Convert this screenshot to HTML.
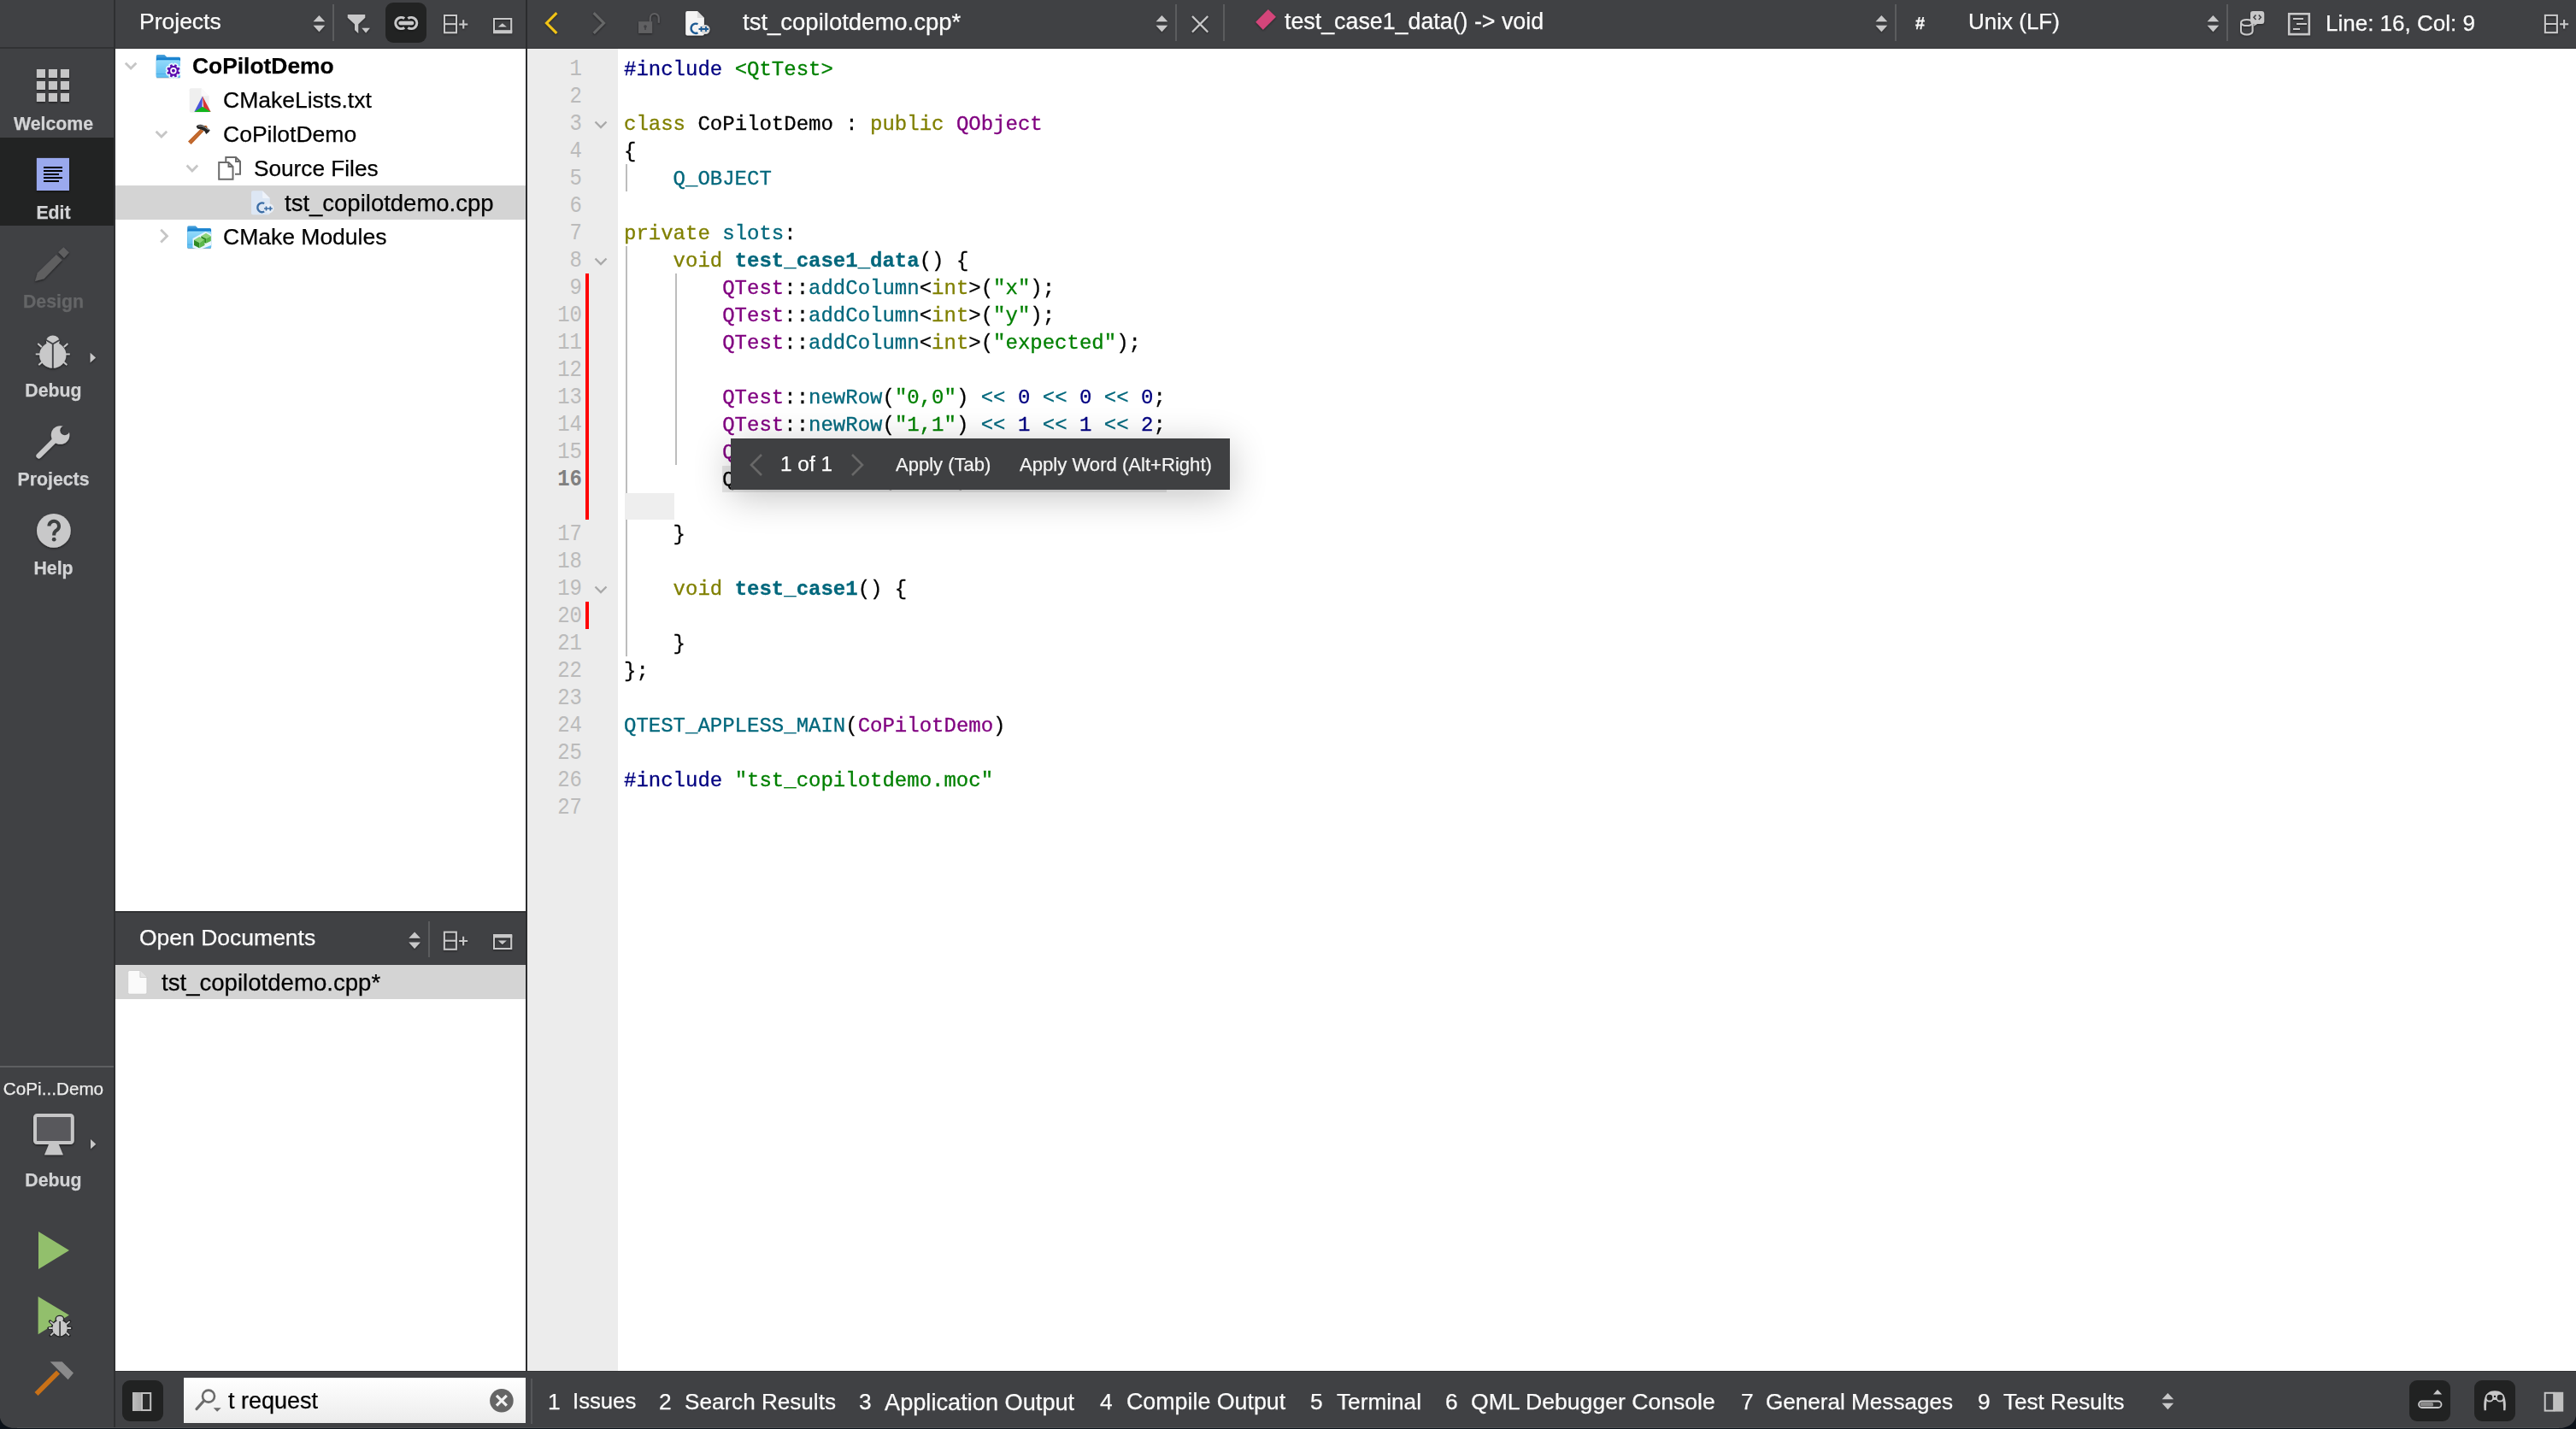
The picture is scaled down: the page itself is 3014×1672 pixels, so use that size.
<!DOCTYPE html>
<html><head><meta charset="utf-8">
<style>
html,body{margin:0;padding:0;width:3014px;height:1672px;overflow:hidden;background:#fff;}
.a{position:absolute;}
.t{position:absolute;font-family:"Liberation Sans",sans-serif;white-space:pre;line-height:1;will-change:transform;-webkit-text-stroke:0.25px currentColor;}
.ui{font-size:26.5px;color:#fbfbfb;}
.tr{font-size:26.5px;color:#000;}
.lab{font-size:21.3px;font-weight:bold;color:#d2d3d5;text-align:center;width:133px;left:-4px;}
.sep{position:absolute;width:2px;background:#5b5c5e;}
.code{position:absolute;left:730px;font-family:"Liberation Mono",monospace;font-size:24px;line-height:32px;white-space:pre;color:#000;-webkit-text-stroke:0.3px currentColor;will-change:transform;}
.ln{position:absolute;left:617px;width:64px;text-align:right;font-family:"Liberation Mono",monospace;font-size:24px;line-height:32px;color:#bbbbbb;transform:scaleY(1.15);transform-origin:0 24px;}
.pp{color:#000080}.st{color:#008000}.kw{color:#808000}.ty{color:#800080}.fn{color:#00677c}.b{font-weight:bold}.nu{color:#000080}
svg{position:absolute;overflow:visible;}
</style></head><body>
<!-- ===== SIDEBAR ===== -->
<div class="a" style="left:0;top:0;width:133px;height:1672px;background:#404144"></div>
<div class="a" style="left:133px;top:0;width:2px;height:1672px;background:#2e2f31"></div>
<div class="a" style="left:0;top:55px;width:133px;height:2px;background:#313234"></div>
<div class="a" style="left:0;top:161px;width:133px;height:103px;background:#222323"></div>
<div class="a" style="left:0;top:1247px;width:133px;height:2px;background:#5e5f61"></div>

<div class="t lab" style="top:135px">Welcome</div>
<div class="t lab" style="top:239px">Edit</div>
<div class="t lab" style="top:343px;color:#646567">Design</div>
<div class="t lab" style="top:447px">Debug</div>
<div class="t lab" style="top:551px">Projects</div>
<div class="t lab" style="top:655px">Help</div>
<div class="t" style="top:1264px;left:-4px;width:133px;text-align:center;font-size:20.7px;color:#ececec">CoPi...Demo</div>
<div class="t lab" style="top:1371px">Debug</div>

<!-- ===== TOP BARS ===== -->
<div class="a" style="left:135px;top:0;width:2879px;height:56px;background:#404144"></div>
<div class="a" style="left:135px;top:56px;width:2879px;height:1px;background:#313234"></div>
<div class="a" style="left:615px;top:0;width:2px;height:1605px;background:#2b2c2e"></div>

<div class="t ui" style="left:163px;top:12px">Projects</div>
<div class="sep" style="left:389px;top:5px;height:43px"></div>
<div class="a" style="left:451px;top:3px;width:48px;height:47px;border-radius:9px;background:#222323"></div>

<div class="t ui" style="left:869px;top:12px;font-size:27.5px">tst_copilotdemo.cpp*</div>
<div class="sep" style="left:1375px;top:5px;height:43px"></div>
<div class="sep" style="left:1431px;top:5px;height:43px"></div>
<div class="t ui" style="left:1503px;top:12px;font-size:26.8px">test_case1_data() -&gt; void</div>
<div class="sep" style="left:2217px;top:5px;height:43px"></div>
<div class="t ui" style="left:2241px;top:17px;font-size:20px;font-weight:bold">#</div>
<div class="t ui" style="left:2303px;top:12px;font-size:26px">Unix (LF)</div>
<div class="sep" style="left:2605px;top:5px;height:43px"></div>
<div class="t ui" style="left:2721px;top:14px;font-size:26px">Line: 16, Col: 9</div>

<!-- ===== PROJECT TREE ===== -->
<div class="a" style="left:135px;top:217px;width:480px;height:40px;background:#d4d4d4"></div>
<div class="t tr" style="left:225px;top:64px;font-weight:bold;font-size:26.4px">CoPilotDemo</div>
<div class="t tr" style="left:261px;top:104px">CMakeLists.txt</div>
<div class="t tr" style="left:261px;top:144px">CoPilotDemo</div>
<div class="t tr" style="left:297px;top:184px;font-size:26.2px">Source Files</div>
<div class="t tr" style="left:333px;top:224px;font-size:27.5px">tst_copilotdemo.cpp</div>
<div class="t tr" style="left:261px;top:264px">CMake Modules</div>

<!-- ===== OPEN DOCUMENTS ===== -->
<div class="a" style="left:135px;top:1067px;width:480px;height:62px;background:#404144"></div>
<div class="a" style="left:135px;top:1066px;width:480px;height:2px;background:#313234"></div>
<div class="t ui" style="left:163px;top:1084px">Open Documents</div>
<div class="sep" style="left:501px;top:1078px;height:42px"></div>
<div class="a" style="left:135px;top:1129px;width:480px;height:40px;background:#d4d4d4"></div>
<div class="t tr" style="left:189px;top:1136px;font-size:27.6px">tst_copilotdemo.cpp*</div>

<!-- ===== EDITOR ===== -->
<div class="a" style="left:617px;top:57px;width:106px;height:1548px;background:#ececec"></div>

<!-- code -->
<div class="a" style="left:845px;top:545px;width:520px;height:31px;background:#e8e8e8"></div>
<div class="a" style="left:731px;top:577px;width:58px;height:31px;background:#eeeeee"></div>
<div class="a" style="left:732px;top:192px;width:2px;height:32px;background:#bdbdbd"></div>
<div class="a" style="left:732px;top:288px;width:2px;height:289px;background:#bdbdbd"></div>
<div class="a" style="left:732px;top:608px;width:2px;height:160px;background:#bdbdbd"></div>
<div class="a" style="left:790px;top:320px;width:2px;height:224px;background:#bdbdbd"></div>
<div class="a" style="left:685px;top:320px;width:4px;height:288px;background:#f00"></div>
<div class="a" style="left:685px;top:704px;width:4px;height:32px;background:#f00"></div>
<div class="ln" style="top:66px">1</div>
<div class="code" style="top:66px"><span class="pp">#include</span> <span class="st">&lt;QtTest&gt;</span></div>
<div class="ln" style="top:98px">2</div>
<div class="ln" style="top:130px">3</div>
<div class="code" style="top:130px"><span class="kw">class</span> CoPilotDemo : <span class="kw">public</span> <span class="ty">QObject</span></div>
<div class="ln" style="top:162px">4</div>
<div class="code" style="top:162px">{</div>
<div class="ln" style="top:194px">5</div>
<div class="code" style="top:194px">    <span class="fn">Q_OBJECT</span></div>
<div class="ln" style="top:226px">6</div>
<div class="ln" style="top:258px">7</div>
<div class="code" style="top:258px"><span class="kw">private</span> <span class="fn">slots</span>:</div>
<div class="ln" style="top:290px">8</div>
<div class="code" style="top:290px">    <span class="kw">void</span> <span class="fn b">test_case1_data</span>() {</div>
<div class="ln" style="top:322px">9</div>
<div class="code" style="top:322px">        <span class="ty">QTest</span>::<span class="fn">addColumn</span>&lt;<span class="kw">int</span>&gt;(<span class="st">"x"</span>);</div>
<div class="ln" style="top:354px">10</div>
<div class="code" style="top:354px">        <span class="ty">QTest</span>::<span class="fn">addColumn</span>&lt;<span class="kw">int</span>&gt;(<span class="st">"y"</span>);</div>
<div class="ln" style="top:386px">11</div>
<div class="code" style="top:386px">        <span class="ty">QTest</span>::<span class="fn">addColumn</span>&lt;<span class="kw">int</span>&gt;(<span class="st">"expected"</span>);</div>
<div class="ln" style="top:418px">12</div>
<div class="ln" style="top:450px">13</div>
<div class="code" style="top:450px">        <span class="ty">QTest</span>::<span class="fn">newRow</span>(<span class="st">"0,0"</span>) <span class="fn">&lt;&lt;</span> <span class="nu">0</span> <span class="fn">&lt;&lt;</span> <span class="nu">0</span> <span class="fn">&lt;&lt;</span> <span class="nu">0</span>;</div>
<div class="ln" style="top:482px">14</div>
<div class="code" style="top:482px">        <span class="ty">QTest</span>::<span class="fn">newRow</span>(<span class="st">"1,1"</span>) <span class="fn">&lt;&lt;</span> <span class="nu">1</span> <span class="fn">&lt;&lt;</span> <span class="nu">1</span> <span class="fn">&lt;&lt;</span> <span class="nu">2</span>;</div>
<div class="ln" style="top:514px">15</div>
<div class="code" style="top:514px">        <span class="ty">QTest</span>::<span class="fn">newRow</span>(<span class="st">"2,2"</span>) <span class="fn">&lt;&lt;</span> <span class="nu">2</span> <span class="fn">&lt;&lt;</span> <span class="nu">2</span> <span class="fn">&lt;&lt;</span> <span class="nu">4</span>;</div>
<div class="ln b" style="top:546px;color:#808080">16</div>
<div class="code" style="top:546px">        QTest::newRow("2,3") &lt;&lt; 2 &lt;&lt; 3 &lt;&lt; 5;</div>
<div class="ln" style="top:610px">17</div>
<div class="code" style="top:610px">    }</div>
<div class="ln" style="top:642px">18</div>
<div class="ln" style="top:674px">19</div>
<div class="code" style="top:674px">    <span class="kw">void</span> <span class="fn b">test_case1</span>() {</div>
<div class="ln" style="top:706px">20</div>
<div class="ln" style="top:738px">21</div>
<div class="code" style="top:738px">    }</div>
<div class="ln" style="top:770px">22</div>
<div class="code" style="top:770px">};</div>
<div class="ln" style="top:802px">23</div>
<div class="ln" style="top:834px">24</div>
<div class="code" style="top:834px"><span class="fn">QTEST_APPLESS_MAIN</span>(<span class="ty">CoPilotDemo</span>)</div>
<div class="ln" style="top:866px">25</div>
<div class="ln" style="top:898px">26</div>
<div class="code" style="top:898px"><span class="pp">#include</span> <span class="st">"tst_copilotdemo.moc"</span></div>
<div class="ln" style="top:930px">27</div>
<svg style="left:695px;top:141px" width="16" height="12"><path d="M1.5 1.5 L8 8 L14.5 1.5" fill="none" stroke="#a9a9a9" stroke-width="2.4"/></svg>
<svg style="left:695px;top:301px" width="16" height="12"><path d="M1.5 1.5 L8 8 L14.5 1.5" fill="none" stroke="#a9a9a9" stroke-width="2.4"/></svg>
<svg style="left:695px;top:685px" width="16" height="12"><path d="M1.5 1.5 L8 8 L14.5 1.5" fill="none" stroke="#a9a9a9" stroke-width="2.4"/></svg>

<!-- ===== BOTTOM BAR ===== -->
<div class="a" style="left:135px;top:1605px;width:2879px;height:67px;background:#404144"></div>
<div class="a" style="left:135px;top:1604px;width:2879px;height:1px;background:#313234"></div>

<!-- ===== POPUP ===== -->
<div class="a" style="left:855px;top:513px;width:584px;height:60px;background:#3f4042;box-shadow:0 8px 44px rgba(0,0,0,0.24)"></div>
<svg style="left:876px;top:530px" width="18" height="28"><path d="M15 2 L3 14 L15 26" fill="none" stroke="#686868" stroke-width="2.6"/></svg>
<div class="t" style="left:913px;top:531px;font-size:24.4px;color:#fff">1 of 1</div>
<svg style="left:994px;top:530px" width="18" height="28"><path d="M3 2 L15 14 L3 26" fill="none" stroke="#686868" stroke-width="2.6"/></svg>
<div class="t" style="left:1048px;top:533px;font-size:22px;color:#f4f4f4">Apply (Tab)</div>
<div class="t" style="left:1193px;top:533px;font-size:22.1px;color:#f4f4f4">Apply Word (Alt+Right)</div>

<div class="a" style="left:143px;top:1615px;width:48px;height:48px;border-radius:9px;background:#212222"></div>
<div class="a" style="left:215px;top:1612px;width:400px;height:53px;background:linear-gradient(#ffffff,#ececec)"></div>
<div class="t" style="left:267px;top:1626px;font-size:27px;color:#000">t request</div>
<div class="sep" style="left:621px;top:1613px;height:53px;background:#56575a"></div>
<div class="t ui" style="left:641.2px;top:1627px;font-size:26.3px">1</div><div class="t ui" style="left:669.7px;top:1627px;font-size:25.7px">Issues</div>
<div class="t ui" style="left:771.3px;top:1627px;font-size:26.3px">2</div><div class="t ui" style="left:801.0px;top:1627px;font-size:26.1px">Search Results</div>
<div class="t ui" style="left:1005.0px;top:1627px;font-size:26.3px">3</div><div class="t ui" style="left:1035.4px;top:1627px;font-size:27.2px">Application Output</div>
<div class="t ui" style="left:1287.2px;top:1627px;font-size:26.3px">4</div><div class="t ui" style="left:1317.7px;top:1627px;font-size:26.8px">Compile Output</div>
<div class="t ui" style="left:1532.6px;top:1627px;font-size:26.3px">5</div><div class="t ui" style="left:1563.8px;top:1627px;font-size:26.2px">Terminal</div>
<div class="t ui" style="left:1690.5px;top:1627px;font-size:26.3px">6</div><div class="t ui" style="left:1720.9px;top:1627px;font-size:26.6px">QML Debugger Console</div>
<div class="t ui" style="left:2037.0px;top:1627px;font-size:26.3px">7</div><div class="t ui" style="left:2065.5px;top:1627px;font-size:26.1px">General Messages</div>
<div class="t ui" style="left:2314.0px;top:1627px;font-size:26.3px">9</div><div class="t ui" style="left:2344.3px;top:1627px;font-size:26.0px">Test Results</div>
<div class="a" style="left:2819px;top:1615px;width:48px;height:48px;border-radius:9px;background:#212222"></div>
<div class="a" style="left:2895px;top:1615px;width:48px;height:48px;border-radius:9px;background:#212222"></div>
<!-- ICONS -->
<svg style="left:0;top:0" width="3014" height="1672" viewBox="0 0 3014 1672">
<defs><filter id="ds2" x="-5%" y="-5%" width="110%" height="110%"><feDropShadow dx="0" dy="1" stdDeviation="0.8" flood-color="#000" flood-opacity="0.5"/></filter></defs><g filter="url(#ds2)">
<path d="M366.6 25.2 L373.4 18.0 L380.2 25.2 Z M366.6 29.8 L380.2 29.8 L373.4 37.3 Z" fill="#c8c8c9"/>
<path d="M406.8 17 H427.2 V20.7 L419.2 28.2 V38.9 L415 35 V28.2 L406.8 20.7 Z" fill="#c8c8c9"/>
<path d="M423.3 32.8 H432.9 L428.1 38.4 Z" fill="#c8c8c9"/>
<path d="M473.2 21.6 A6.6 6.6 0 1 0 473.2 32.4 M477.3 21.6 A6.6 6.6 0 1 1 477.3 32.4" fill="none" stroke="#c8c8c9" stroke-width="3"/>
<path d="M468.6 27 H482" stroke="#c8c8c9" stroke-width="4.6" stroke-linecap="round"/>
<rect x="520" y="18" width="14" height="20.2" fill="none" stroke="#c8c8c9" stroke-width="2"/><path d="M520 28.1 H534" stroke="#c8c8c9" stroke-width="2"/><path d="M537.2 28.4 H547.2 M542.2 23.2 V33.6" stroke="#c8c8c9" stroke-width="2"/>
<rect x="578" y="22" width="20.2" height="15" fill="none" stroke="#c8c8c9" stroke-width="2"/>
<rect x="577" y="35.2" width="22.2" height="4" fill="#c8c8c9"/>
<path d="M582.8 31.6 H592.8 L587.8 27.2 Z" fill="#c8c8c9"/>
<path d="M651.3 15.1 L639.5 27 L651.3 38.9" fill="none" stroke="#f2c417" stroke-width="3"/>
<path d="M694.7 15.1 L706.5 27 L694.7 38.9" fill="none" stroke="#666768" stroke-width="3"/>
<rect x="747" y="25.2" width="16.1" height="13.7" fill="#606062"/>
<path d="M760.8 25.5 V21 A5 5 0 0 1 770.8 21 V26.7" fill="none" stroke="#606062" stroke-width="2"/>
<circle cx="755" cy="31" r="1.8" fill="#404144"/><rect x="754.2" y="31" width="1.6" height="4" fill="#404144"/>
<path d="M804.2 13.1 H815.9000000000001 L823.9000000000001 21.1 V39.4 Q823.9000000000001 41.4 821.9000000000001 41.4 H804.2 Q802.2 41.4 802.2 39.4 V15.1 Q802.2 13.1 804.2 13.1 Z" fill="#f4f4f4"/><path d="M815.9000000000001 13.1 V21.1 H823.9000000000001" fill="#dcdcdc"/>
<circle cx="825" cy="34.5" r="5.5" fill="#d8d8d8"/>
<path d="M816.5 28.2 A5.6 5.6 0 1 0 816.5 38.4" fill="none" stroke="#1d5a93" stroke-width="2.4"/>
<path d="M817.5 34 H823.5 M820.5 31 V37 M823 34 H829 M826 31 V37" stroke="#1d5a93" stroke-width="1.8"/>
<path d="M1352.6 25.2 L1359.4 18.0 L1366.2 25.2 Z M1352.6 29.8 L1366.2 29.8 L1359.4 37.3 Z" fill="#c8c8c9"/>
<path d="M1395 19 L1413.2 37.4 M1413.2 19 L1395 37.4" stroke="#c8c8c9" stroke-width="2.2"/>
<path d="M1483.8 10.9 L1492.9 19.7 L1477.8 34.8 L1469.2 25.7 Z" fill="#d4457a"/>
<path d="M2194.6 25.2 L2201.4 18.0 L2208.2 25.2 Z M2194.6 29.8 L2208.2 29.8 L2201.4 37.3 Z" fill="#c8c8c9"/>
<path d="M2582.6 25.2 L2589.4 18.0 L2596.2 25.2 Z M2582.6 29.8 L2596.2 29.8 L2589.4 37.3 Z" fill="#c8c8c9"/>
<path d="M2622 27 V36.5 A6.8 4 0 0 0 2635.6 36.5 V27" fill="none" stroke="#c8c8c9" stroke-width="2"/>
<ellipse cx="2628.8" cy="26.5" rx="6.8" ry="3.6" fill="none" stroke="#c8c8c9" stroke-width="2"/>
<path d="M2636 12.9 H2646 Q2649.2 12.9 2649.2 16 V25 Q2649.2 28 2646 28 H2641 L2637 30.5 L2637.5 28 Q2633 28 2633 25 V16 Q2633 12.9 2636 12.9 Z" fill="#c8c8c9"/>
<path d="M2639.5 17.5 L2637 20.3 L2639.5 23 M2642.8 17.5 L2645.3 20.3 L2642.8 23" fill="none" stroke="#404144" stroke-width="1.6"/>
<rect x="2678.2" y="16.2" width="23.6" height="23.9" fill="none" stroke="#c8c8c9" stroke-width="2.5"/>
<path d="M2683 22 H2695 M2687 28 H2699 M2683 34.1 H2691" stroke="#c8c8c9" stroke-width="2"/>
<rect x="2977.9" y="17.9" width="14" height="20.2" fill="none" stroke="#c8c8c9" stroke-width="2"/><path d="M2977.9 28.0 H2991.9" stroke="#c8c8c9" stroke-width="2"/><path d="M2995.1 28.299999999999997 H3005.1 M3000.1 23.099999999999998 V33.5" stroke="#c8c8c9" stroke-width="2"/>
<path d="M478.3 1097.8 L485.1 1090.6 L491.9 1097.8 Z M478.3 1102.4 L491.9 1102.4 L485.1 1109.9 Z" fill="#c8c8c9"/>
<rect x="519.9" y="1090.6" width="14" height="20.2" fill="none" stroke="#c8c8c9" stroke-width="2"/><path d="M519.9 1100.6999999999998 H533.9" stroke="#c8c8c9" stroke-width="2"/><path d="M537.1 1101.0 H547.1 M542.1 1095.8 V1106.1999999999998" stroke="#c8c8c9" stroke-width="2"/>
<rect x="578" y="1095" width="20.2" height="15" fill="none" stroke="#c8c8c9" stroke-width="2"/>
<rect x="577" y="1093" width="22.2" height="4.2" fill="#c8c8c9"/>
<path d="M582.8 1100.6 H592.8 L587.8 1105 Z" fill="#c8c8c9"/>
</g>
<path d="M151.7 1135.5 H163.9 L171.9 1143.5 V1161.2 Q171.9 1163.2 169.9 1163.2 H151.7 Q149.7 1163.2 149.7 1161.2 V1137.5 Q149.7 1135.5 151.7 1135.5 Z" fill="#fafafa" stroke="#c9c9c9" stroke-width="0.8"/>
<path d="M163.9 1135.5 V1143.5 H171.9" fill="#e4e4e4" stroke="#c9c9c9" stroke-width="0.8"/>
<path d="M146.8 73.8 L153.1 80.1 L159.4 73.8" fill="none" stroke="#c6c6c6" stroke-width="2.8"/>
<path d="M182.6 153.8 L188.9 160.1 L195.2 153.8" fill="none" stroke="#c6c6c6" stroke-width="2.8"/>
<path d="M218.6 193.6 L224.9 199.9 L231.2 193.6" fill="none" stroke="#c6c6c6" stroke-width="2.8"/>
<path d="M188.2 268.8 L195.5 276.2 L188.2 283.6" fill="none" stroke="#c6c6c6" stroke-width="2.8"/>
<defs><linearGradient id="fband" x1="0" y1="0" x2="0" y2="1"><stop offset="0" stop-color="#56a9de"/><stop offset="0.22" stop-color="#0b78cb"/><stop offset="0.3" stop-color="#0b78cb"/></linearGradient><linearGradient id="fbody" x1="0" y1="0" x2="0" y2="1"><stop offset="0" stop-color="#93dafb"/><stop offset="1" stop-color="#5cbdf0"/></linearGradient></defs>
<path d="M184.3 64 H192.4 L195.10000000000002 66.7 H209.5 Q211.0 66.7 211.0 68.2 V89.3 Q211.0 90.8 209.5 90.8 H184.3 Q182.8 90.8 182.8 89.3 V65.5 Q182.8 64 184.3 64 Z" fill="url(#fband)"/><rect x="182.8" y="70.2" width="28.2" height="20.6" rx="1.5" fill="url(#fbody)"/><rect x="182.8" y="86.0" width="28.2" height="1" fill="#4fb0e6"/><rect x="183.3" y="90.6" width="27.2" height="1" fill="#9aa3aa" opacity="0.6"/>
<path d="M208.74 83.67 L210.48 84.62 L209.55 86.88 L207.64 86.31 L206.41 87.54 L206.98 89.45 L204.72 90.38 L203.77 88.64 L202.03 88.64 L201.08 90.38 L198.82 89.45 L199.39 87.54 L198.16 86.31 L196.25 86.88 L195.32 84.62 L197.06 83.67 L197.06 81.93 L195.32 80.98 L196.25 78.72 L198.16 79.29 L199.39 78.06 L198.82 76.15 L201.08 75.22 L202.03 76.96 L203.77 76.96 L204.72 75.22 L206.98 76.15 L206.41 78.06 L207.64 79.29 L209.55 78.72 L210.48 80.98 L208.74 81.93 Z" fill="#e6f7ff" stroke="#e6f7ff" stroke-width="3.2" stroke-linejoin="round"/><path d="M208.74 83.67 L210.48 84.62 L209.55 86.88 L207.64 86.31 L206.41 87.54 L206.98 89.45 L204.72 90.38 L203.77 88.64 L202.03 88.64 L201.08 90.38 L198.82 89.45 L199.39 87.54 L198.16 86.31 L196.25 86.88 L195.32 84.62 L197.06 83.67 L197.06 81.93 L195.32 80.98 L196.25 78.72 L198.16 79.29 L199.39 78.06 L198.82 76.15 L201.08 75.22 L202.03 76.96 L203.77 76.96 L204.72 75.22 L206.98 76.15 L206.41 78.06 L207.64 79.29 L209.55 78.72 L210.48 80.98 L208.74 81.93 Z" fill="#5b0cae"/><circle cx="202.9" cy="82.8" r="3.7" fill="#ffffff"/><circle cx="202.9" cy="82.8" r="2" fill="#5b0cae"/>
<path d="M223.6 103.3 H235.5 L244.5 112.3 V129.7 Q244.5 131.7 242.5 131.7 H223.6 Q221.6 131.7 221.6 129.7 V105.3 Q221.6 103.3 223.6 103.3 Z" fill="#efefef"/>
<path d="M235.5 103.3 V112.3 H244.5 Z" fill="#fbfbfb"/>
<path d="M236.9 112.6 L227.3 130.9 L236.5 126.5 Z" fill="#4b55d9"/>
<path d="M236.9 112.6 L246.7 130.9 L238.3 127 Z" fill="#d63636"/>
<path d="M227.3 130.9 L246.7 130.9 L236.8 124.8 Z" fill="#12b51c"/>
<path d="M220 165.5 L234.8 150.7 L238.4 153.4 L223.6 168.9 Z" fill="#bf6428"/>
<path d="M221.8 167.2 L236.6 152" stroke="#d2814a" stroke-width="1" opacity="0.6"/>
<circle cx="240.4" cy="149" r="2.2" fill="#c46a2c"/>
<path d="M229.6 147.8 Q233 144.4 238.4 147 L245.8 152.3 L244.2 154.4 L241.2 156.9 L239.4 153.6 Q235.5 150.6 231 150.4 Z" fill="#262626"/>
<path d="M232.2 147.4 Q236 146.4 239.6 148.9 L244.2 152" fill="none" stroke="#a0a0a0" stroke-width="1"/>
<path d="M264.3 189.5 V184 H276 L281 189 V203.8 H275" fill="none" stroke="#6b6b6b" stroke-width="2"/>
<path d="M276 184 V189 H281" fill="none" stroke="#6b6b6b" stroke-width="2"/>
<path d="M256.2 190 H267.5 L272.5 195 V209.7 H256.2 Z" fill="#ffffff" stroke="#6b6b6b" stroke-width="2"/>
<path d="M267.5 190 V195 H272.5" fill="none" stroke="#6b6b6b" stroke-width="2"/>
<path d="M296 223.3 H307.1 L315.8 232 V249.2 Q315.8 251.2 313.8 251.2 H296 Q294 251.2 294 249.2 V225.3 Q294 223.3 296 223.3 Z" fill="#dde7f4"/>
<path d="M307.1 223.3 V231 Q307.1 232 308.1 232 H315.8 Z" fill="#eef3fa"/>
<circle cx="314.8" cy="243.8" r="5.6" fill="#e9eff7"/>
<path d="M309.2 238 A5.4 5.4 0 1 0 309.2 247.6" fill="none" stroke="#3c6ea6" stroke-width="2.3"/>
<path d="M309 244 H314 M311.5 241.5 V246.5 M313.8 244 H318.8 M316.3 241.5 V246.5" stroke="#3c6ea6" stroke-width="1.7"/>
<path d="M220.7 264.3 H228.79999999999998 L231.5 267.0 H245.6 Q247.1 267.0 247.1 268.5 V288.90000000000003 Q247.1 290.40000000000003 245.6 290.40000000000003 H220.7 Q219.2 290.40000000000003 219.2 288.90000000000003 V265.8 Q219.2 264.3 220.7 264.3 Z" fill="url(#fband)"/><rect x="219.2" y="270.5" width="27.9" height="19.900000000000002" rx="1.5" fill="url(#fbody)"/><rect x="219.2" y="285.6" width="27.9" height="1" fill="#4fb0e6"/><rect x="219.7" y="290.20000000000005" width="26.9" height="1" fill="#9aa3aa" opacity="0.6"/>
<path d="M225.5 279 L240.5 271 L247.1 274 V287 L234 292 L225.5 290 Z" fill="#e8f6ff"/>
<path d="M235.3 276.15 L241.05 272.7 L246.8 276.15 L241.05 279.025 Z" fill="#8fd47a"/><path d="M235.3 276.15 L241.05 279.025 V284.775 L235.3 281.9 Z" fill="#2f8a23"/><path d="M241.05 279.025 L246.8 276.15 V281.9 L241.05 284.775 Z" fill="#5cb84b"/>
<path d="M227 280.75 L233.25 277 L239.5 280.75 L233.25 283.875 Z" fill="#8fd47a"/><path d="M227 280.75 L233.25 283.875 V290.125 L227 287.0 Z" fill="#2f8a23"/><path d="M233.25 283.875 L239.5 280.75 V287.0 L233.25 290.125 Z" fill="#5cb84b"/>
<defs><filter id="ds" x="-30%" y="-30%" width="160%" height="160%"><feDropShadow dx="0" dy="1.2" stdDeviation="1.2" flood-color="#000" flood-opacity="0.55"/></filter></defs><g filter="url(#ds)">
<rect x="42.9" y="81" width="10.1" height="10" fill="#c5c5c6"/>
<rect x="42.9" y="95" width="10.1" height="10" fill="#c5c5c6"/>
<rect x="42.9" y="109" width="10.1" height="10" fill="#c5c5c6"/>
<rect x="56.9" y="81" width="10.1" height="10" fill="#c5c5c6"/>
<rect x="56.9" y="95" width="10.1" height="10" fill="#c5c5c6"/>
<rect x="56.9" y="109" width="10.1" height="10" fill="#c5c5c6"/>
<rect x="70.9" y="81" width="10.1" height="10" fill="#c5c5c6"/>
<rect x="70.9" y="95" width="10.1" height="10" fill="#c5c5c6"/>
<rect x="70.9" y="109" width="10.1" height="10" fill="#c5c5c6"/>
<rect x="42.9" y="184.9" width="38.1" height="38.1" fill="#9aa9ee"/>
<rect x="51" y="195" width="22" height="2" fill="#000"/>
<rect x="51" y="199" width="22" height="2" fill="#000"/>
<rect x="51" y="203" width="18" height="2" fill="#000"/>
<rect x="51" y="207" width="22" height="2" fill="#000"/>
<rect x="51" y="211" width="18" height="2" fill="#000"/>
<path d="M41 329 L43.9 319.3 L65.8 297.9 L72.7 304.2 L51.4 326.2 Z" fill="#5f5f61"/>
<path d="M68.1 295 L74.5 289.2 L80.8 295.6 L75 302 Z" fill="#5f5f61"/>
<g><path d="M44.30 402.00 L48.80 406.00 M41.80 414.30 L47.30 414.30 M45.30 427.00 L49.30 423.50 M79.30 402.00 L74.80 406.00 M81.80 414.30 L76.30 414.30 M78.30 427.00 L74.30 423.50" stroke="#c8c8c9" stroke-width="1.80"/><ellipse cx="61.8" cy="399.50" rx="7.80" ry="7.00" fill="#c8c8c9"/><ellipse cx="61.8" cy="415.50" rx="15.60" ry="15.20" fill="#c8c8c9"/><path d="M53.30 397.50 L61.80 402.50 L70.30 397.50 M61.80 402.50 V431.00" fill="none" stroke="#404144" stroke-width="1.90"/></g>
<path d="M105.6 412.8 L112 418.6 L105.6 424.3 Z" fill="#c8c8c9"/>
<defs><mask id="wm"><rect x="30" y="490" width="70" height="60" fill="#fff"/><circle cx="75.8" cy="503.6" r="5.6" fill="#000"/><path d="M75.8 503.6 L84 488 L95 500 Z" fill="#000"/></mask></defs>
<g mask="url(#wm)"><circle cx="70.6" cy="509" r="10.8" fill="#c8c8c9"/><path d="M45.5 533.4 L64 515" stroke="#c8c8c9" stroke-width="6.2" stroke-linecap="round"/></g>
<circle cx="62.9" cy="620.8" r="19.9" fill="#c8c8c9"/>
<path d="M57.4 615.6 A5.8 5.8 0 1 1 67.2 619.8 Q63.2 622.2 63.2 625.2 V626.6" fill="none" stroke="#3e3f41" stroke-width="4"/>
<circle cx="63.2" cy="631.2" r="2.4" fill="#3e3f41"/>
<rect x="41" y="1304.9" width="43.8" height="32.1" rx="2.5" fill="#58595b" stroke="#c6c6c7" stroke-width="4"/>
<path d="M57.1 1339 H68.7 L73.9 1351.2 H52 Z" fill="#c6c6c7"/>
<path d="M106 1333 L112.2 1338.7 L106 1344.3 Z" fill="#c8c8c9"/>
</g>
<path d="M45 1441 L81 1463 L45 1485 Z" fill="#92bf6c"/>
<path d="M44.6 1517 L80.9 1538.8 L44.6 1561.3 Z" fill="#92bf6c"/>
<path d="M58.6 1546.1 L63 1549.8 M81.6 1546.1 L77.2 1549.8 M57.1 1554 L61.5 1554 M83.1 1554 L78.7 1554 M59.2 1562.5 L62.8 1559.2 M81.0 1562.5 L77.4 1559.2 " stroke="#242526" stroke-width="3.6" stroke-linecap="round"/>
<ellipse cx="70.1" cy="1554" rx="10.3" ry="10.7" fill="#242526"/><ellipse cx="69.9" cy="1543.4" rx="5.4" ry="4.7" fill="#242526"/>
<path d="M58.6 1546.1 L63 1549.8 M81.6 1546.1 L77.2 1549.8 M57.1 1554 L61.5 1554 M83.1 1554 L78.7 1554 M59.2 1562.5 L62.8 1559.2 M81.0 1562.5 L77.4 1559.2 " stroke="#c8c8c9" stroke-width="1.8" stroke-linecap="butt"/>
<ellipse cx="70.1" cy="1554" rx="8.8" ry="9.2" fill="#c8c8c9"/><ellipse cx="69.9" cy="1543.3" rx="4" ry="3.3" fill="#c8c8c9"/>
<path d="M70.1 1546 V1563.6" stroke="#242526" stroke-width="1.5"/>
<path d="M42.5 1631 L68 1605.5" stroke="#c97117" stroke-width="5.6"/>
<path d="M58.6 1593.2 L72.6 1593.2 L86 1606.6 L79.6 1614.2 Z" fill="#8a8a8b"/>
<defs><linearGradient id="tg" x1="0" x2="1"><stop offset="0" stop-color="#bdbdbd"/><stop offset="1" stop-color="#a9a9a9"/></linearGradient></defs>
<rect x="155" y="1629" width="10.5" height="22" fill="url(#tg)"/>
<rect x="166" y="1630" width="10.2" height="20" fill="#2a2b2b" stroke="#c0c0c0" stroke-width="2"/>
<circle cx="244" cy="1633.6" r="7" fill="none" stroke="#6b6b6b" stroke-width="2.6"/>
<path d="M238.6 1639 L230 1648.6" stroke="#6b6b6b" stroke-width="3.2" stroke-linecap="round"/>
<path d="M249.7 1647.3 H258.6 L254.1 1651.8 Z" fill="#6b6b6b"/>
<circle cx="586.9" cy="1638.8" r="13.8" fill="#656565"/>
<path d="M581 1632.9 L592.8 1644.7 M592.8 1632.9 L581 1644.7" stroke="#f2f2f2" stroke-width="3.2"/>
<path d="M2529.6 1637.2 L2536.4 1630.0 L2543.2 1637.2 Z M2529.6 1641.8 L2543.2 1641.8 L2536.4 1649.3 Z" fill="#c8c8c9"/>
<path d="M2846.9 1631.4 H2857.2 L2852 1626 Z" fill="#c8c8c9"/>
<rect x="2830" y="1639.5" width="26.5" height="7.5" rx="3.7" fill="#2a2b2b" stroke="#c8c8c9" stroke-width="1.8"/>
<rect x="2831.5" y="1641" width="15.5" height="4.5" rx="1.5" fill="#8a8a8a"/>
<path d="M2906.6 1650.3 C2905.6 1641 2905.8 1627.2 2919 1627.2 C2932.2 1627.2 2932.4 1641 2931.4 1650.3 Z" fill="#c8c8c9"/>
<path d="M2908.9 1652 C2908.9 1646 2909 1642 2909.8 1638 L2928.2 1638 C2929 1642 2929.1 1646 2929.1 1652 Z" fill="#212222"/>
<circle cx="2912.9" cy="1635.2" r="4.3" fill="#212222" stroke="#c8c8c9" stroke-width="1.8"/>
<circle cx="2925.1" cy="1635.2" r="4.3" fill="#212222" stroke="#c8c8c9" stroke-width="1.8"/>
<circle cx="2919" cy="1633.9" r="1.1" fill="#111"/>
<rect x="2977.7" y="1629.8" width="10.5" height="20.8" fill="none" stroke="#c8c8c9" stroke-width="2"/>
<rect x="2988.5" y="1628.8" width="10.7" height="22.8" fill="#c0c0c0"/>
<path d="M0 1659 V1672 H21 C9 1671.2 1.5 1667 0 1659 Z" fill="#0c121a"/>
<path d="M3014 1657 V1672 H2990 C3003 1671.2 3012 1667 3014 1657 Z" fill="#0c121a"/>
<rect x="0" y="1671" width="3014" height="1" fill="#0c121a"/>
<rect x="20" y="1670" width="2974" height="1" fill="#4f5052"/>
</svg>
<!-- /ICONS -->
</body></html>
